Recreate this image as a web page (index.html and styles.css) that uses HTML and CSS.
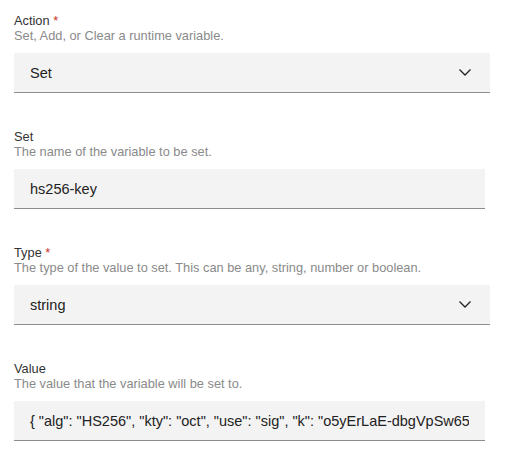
FILE: index.html
```html
<!DOCTYPE html>
<html>

<head>
    <meta charset="utf-8">
    <title>Set Variable</title>
    <link rel="stylesheet" href="styles.css">
</head>

<body>
    <form class="form">
        <div class="field">
            <div class="label">Action <span class="req">*</span></div>
            <div class="desc">Set, Add, or Clear a runtime variable.</div>
            <div class="control select">
                <span class="value">Set</span>
                <svg class="chevron" width="12" height="7" viewBox="0 0 12 7">
                    <path d="M0.5 0.5 L6 6 L11.5 0.5" fill="none" stroke="#222" stroke-width="1.3"/>
                </svg>
            </div>
        </div>

        <div class="field">
            <div class="label">Set</div>
            <div class="desc">The name of the variable to be set.</div>
            <div class="control input">
                <span class="value">hs256-key</span>
            </div>
        </div>

        <div class="field">
            <div class="label">Type <span class="req">*</span></div>
            <div class="desc">The type of the value to set. This can be any, string, number or boolean.</div>
            <div class="control select">
                <span class="value">string</span>
                <svg class="chevron" width="12" height="7" viewBox="0 0 12 7">
                    <path d="M0.5 0.5 L6 6 L11.5 0.5" fill="none" stroke="#222" stroke-width="1.3"/>
                </svg>
            </div>
        </div>

        <div class="field">
            <div class="label">Value</div>
            <div class="desc">The value that the variable will be set to.</div>
            <div class="control input">
                <span class="value">{ "alg": "HS256", "kty": "oct", "use": "sig", "k": "o5yErLaE-dbgVpSw65</span>
            </div>
        </div>
    </form>
</body>

</html>
```
FILE: styles.css
```css
html,
body {
    margin: 0;
    padding: 0;
    background: #fff;
}

body {
    font-family: "Liberation Sans", Arial, sans-serif;
    color: #333;
}

.form {
    padding: 14px 0 0 14px;
}

.field {
    margin-bottom: 37px;
}

.field:last-child {
    margin-bottom: 0;
}

.label {
    font-size: 12.8px;
    line-height: 14px;
    color: #333;
}

.req {
    color: #c9302c;
}

.desc {
    font-size: 12.8px;
    line-height: 15px;
    color: #8a8a8a;
    margin-bottom: 10px;
}

.control {
    display: flex;
    align-items: center;
    box-sizing: border-box;
    height: 40px;
    padding: 0 16px;
    background: #f3f3f3;
    border-bottom: 1px solid #8c8c8c;
}

.select {
    width: 476px;
    justify-content: space-between;
    padding-right: 19px;
}

.input {
    width: 471px;
}

.value {
    font-size: 14.5px;
    color: #222;
    white-space: nowrap;
    overflow: hidden;
}

.chevron {
    flex-shrink: 0;
}
```
